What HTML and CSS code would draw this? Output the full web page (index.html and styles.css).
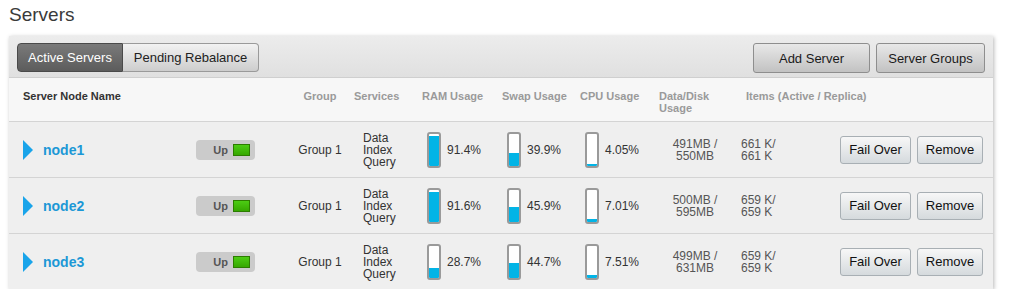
FILE: index.html
```html
<!DOCTYPE html>
<html>
<head>
<meta charset="utf-8">
<link rel="stylesheet" href="styles.css">
</head>
<body>
<h1 class="title">Servers</h1>
<div class="panel">
  <div class="toolbar">
    <div class="tabs">
      <span class="tab tab-active">Active Servers</span>
      <span class="tab tab-idle">Pending Rebalance</span>
    </div>
    <div class="tools">
      <span class="tbtn btn-add">Add Server</span>
      <span class="tbtn btn-groups">Server Groups</span>
    </div>
  </div>
  <div class="grid head">
    <div class="h-name">Server Node Name</div>
    <div></div>
    <div class="h-group">Group</div>
    <div class="h-svc">Services</div>
    <div class="h-use">RAM Usage</div>
    <div class="h-use">Swap Usage</div>
    <div class="h-use">CPU Usage</div>
    <div class="h-data">Data/Disk<br>Usage</div>
    <div class="h-items">Items (Active / Replica)</div>
    <div></div>
  </div>

  <div class="grid row">
    <div class="c-name"><span class="tri"></span><span class="node">node1</span></div>
    <div class="c-status"><span class="badge">Up <span class="led"></span></span></div>
    <div class="c-group">Group 1</div>
    <div class="c-svc">Data<br>Index<br>Query</div>
    <div class="c-use"><span class="gauge"><span class="fill" style="height:91.4%"></span></span>91.4%</div>
    <div class="c-use"><span class="gauge"><span class="fill" style="height:39.9%"></span></span>39.9%</div>
    <div class="c-use"><span class="gauge"><span class="fill" style="height:4.05%"></span></span>4.05%</div>
    <div class="c-data">491MB /<br>550MB</div>
    <div class="c-items">661 K/<br>661 K</div>
    <div class="c-act"><span class="rbtn fo">Fail Over</span><span class="rbtn rm">Remove</span></div>
  </div>

  <div class="grid row">
    <div class="c-name"><span class="tri"></span><span class="node">node2</span></div>
    <div class="c-status"><span class="badge">Up <span class="led"></span></span></div>
    <div class="c-group">Group 1</div>
    <div class="c-svc">Data<br>Index<br>Query</div>
    <div class="c-use"><span class="gauge"><span class="fill" style="height:91.6%"></span></span>91.6%</div>
    <div class="c-use"><span class="gauge"><span class="fill" style="height:45.9%"></span></span>45.9%</div>
    <div class="c-use"><span class="gauge"><span class="fill" style="height:7.01%"></span></span>7.01%</div>
    <div class="c-data">500MB /<br>595MB</div>
    <div class="c-items">659 K/<br>659 K</div>
    <div class="c-act"><span class="rbtn fo">Fail Over</span><span class="rbtn rm">Remove</span></div>
  </div>

  <div class="grid row">
    <div class="c-name"><span class="tri"></span><span class="node">node3</span></div>
    <div class="c-status"><span class="badge">Up <span class="led"></span></span></div>
    <div class="c-group">Group 1</div>
    <div class="c-svc">Data<br>Index<br>Query</div>
    <div class="c-use"><span class="gauge"><span class="fill" style="height:28.7%"></span></span>28.7%</div>
    <div class="c-use"><span class="gauge"><span class="fill" style="height:44.7%"></span></span>44.7%</div>
    <div class="c-use"><span class="gauge"><span class="fill" style="height:7.51%"></span></span>7.51%</div>
    <div class="c-data">499MB /<br>631MB</div>
    <div class="c-items">659 K/<br>659 K</div>
    <div class="c-act"><span class="rbtn fo">Fail Over</span><span class="rbtn rm">Remove</span></div>
  </div>
</div>
</body>
</html>
```

FILE: styles.css
```css
html, body {
  margin: 0;
  padding: 0;
  background: #ffffff;
  font-family: "Liberation Sans", Arial, sans-serif;
  color: #333;
}

.title {
  margin: 0;
  padding: 3px 9px 0;
  font-size: 19px;
  line-height: 24px;
  font-weight: normal;
  color: #3a3a3a;
  height: 33px;
}

.panel {
  margin-left: 9px;
  width: 984px;
  background: #efefef;
  box-shadow: 1px 1px 4px rgba(0, 0, 0, 0.28);
}

.toolbar {
  height: 42px;
  box-sizing: border-box;
  padding: 7px 8px 0 8px;
  display: flex;
  justify-content: space-between;
  align-items: flex-start;
  background: linear-gradient(#ececec, #e0e0e0);
  border-bottom: 1px solid #cfcfcf;
}

.tabs {
  display: flex;
}

.tab {
  display: flex;
  align-items: center;
  height: 29px;
  box-sizing: border-box;
  font-size: 13px;
  padding: 0 10px;
}

.tab-active {
  width: 106px;
  justify-content: center;
  color: #fff;
  background: linear-gradient(#7a7a7a, #5c5c5c);
  border: 1px solid #4a4a4a;
  border-radius: 4px 0 0 4px;
}

.tab-idle {
  width: 136px;
  justify-content: center;
  color: #222;
  background: linear-gradient(#f2f2f2, #cdcdcd);
  border: 1px solid #9a9a9a;
  border-left: none;
  border-radius: 0 4px 4px 0;
}

.tools {
  display: flex;
  gap: 6px;
}

.tbtn {
  display: flex;
  align-items: center;
  justify-content: center;
  height: 30px;
  box-sizing: border-box;
  font-size: 13px;
  color: #1a1a1a;
  background: linear-gradient(#e8e8e8, #c2c2c2);
  border: 1px solid #8e8e8e;
  border-radius: 3px;
}

.btn-add { width: 117px; }
.btn-groups { width: 109px; }

.grid {
  display: grid;
  grid-template-columns: 181px 100px 60px 70px 80px 78px 77px 80px 95px 163px;
}

.head {
  height: 43px;
  box-sizing: border-box;
  padding-top: 12px;
  background: #f7f7f7;
  font-size: 11px;
  font-weight: bold;
  color: #9a9a9a;
  line-height: 12px;
}

.h-name { padding-left: 14px; color: #333; }
.h-group { text-align: center; }
.h-svc { padding-left: 4px; }
.h-use { padding-left: 2px; }
.h-data { padding-left: 4px; }
.h-items { padding-left: 11px; white-space: nowrap; }

.row {
  height: 56px;
  box-sizing: border-box;
  border-top: 1px solid #d4d4d4;
  background: #efefef;
  font-size: 12px;
  color: #333;
}

.row > div {
  display: flex;
  align-items: center;
}

.c-name { padding-left: 14px; }

.tri {
  width: 0;
  height: 0;
  border-left: 10px solid #19a4ea;
  border-top: 10px solid transparent;
  border-bottom: 10px solid transparent;
  margin-right: 10px;
}

.node {
  font-size: 14px;
  font-weight: bold;
  color: #1c98d6;
}

.c-status { padding-left: 6px; }

.badge {
  display: flex;
  align-items: center;
  justify-content: flex-end;
  width: 59px;
  height: 20px;
  box-sizing: border-box;
  padding-right: 5px;
  background: #cbcbcb;
  border-radius: 4px;
  font-size: 11px;
  font-weight: bold;
  color: #555;
}

.led {
  display: inline-block;
  width: 17px;
  height: 12px;
  box-sizing: border-box;
  margin-left: 5px;
  background: linear-gradient(#4ccc14, #36a800);
  border: 1px solid #2c7d00;
}

.c-group { justify-content: center; }

.c-svc {
  padding-left: 13px;
  line-height: 12px;
}

.c-use {
  padding-left: 7px;
}

.gauge {
  position: relative;
  display: inline-block;
  width: 14px;
  height: 36px;
  box-sizing: border-box;
  margin-right: 6px;
  background: #fff;
  border: 2px solid #9a9a9a;
  border-radius: 3px;
  overflow: hidden;
}

.fill {
  position: absolute;
  left: 0;
  right: 0;
  bottom: 0;
  background: #02b4e6;
}

.c-data {
  justify-content: center;
  text-align: center;
  line-height: 12px;
  color: #555;
}

.c-items {
  padding-left: 6px;
  line-height: 12px;
  color: #555;
}

.c-act {
  justify-content: flex-end;
  padding-right: 10px;
  gap: 6px;
}

.rbtn {
  display: flex;
  align-items: center;
  justify-content: center;
  height: 28px;
  box-sizing: border-box;
  font-size: 13px;
  color: #111;
  background: linear-gradient(#f7f7f7, #d5dadd);
  border: 1px solid #a8afb4;
  border-radius: 3px;
}

.fo { width: 71px; }
.rm { width: 66px; }
```
